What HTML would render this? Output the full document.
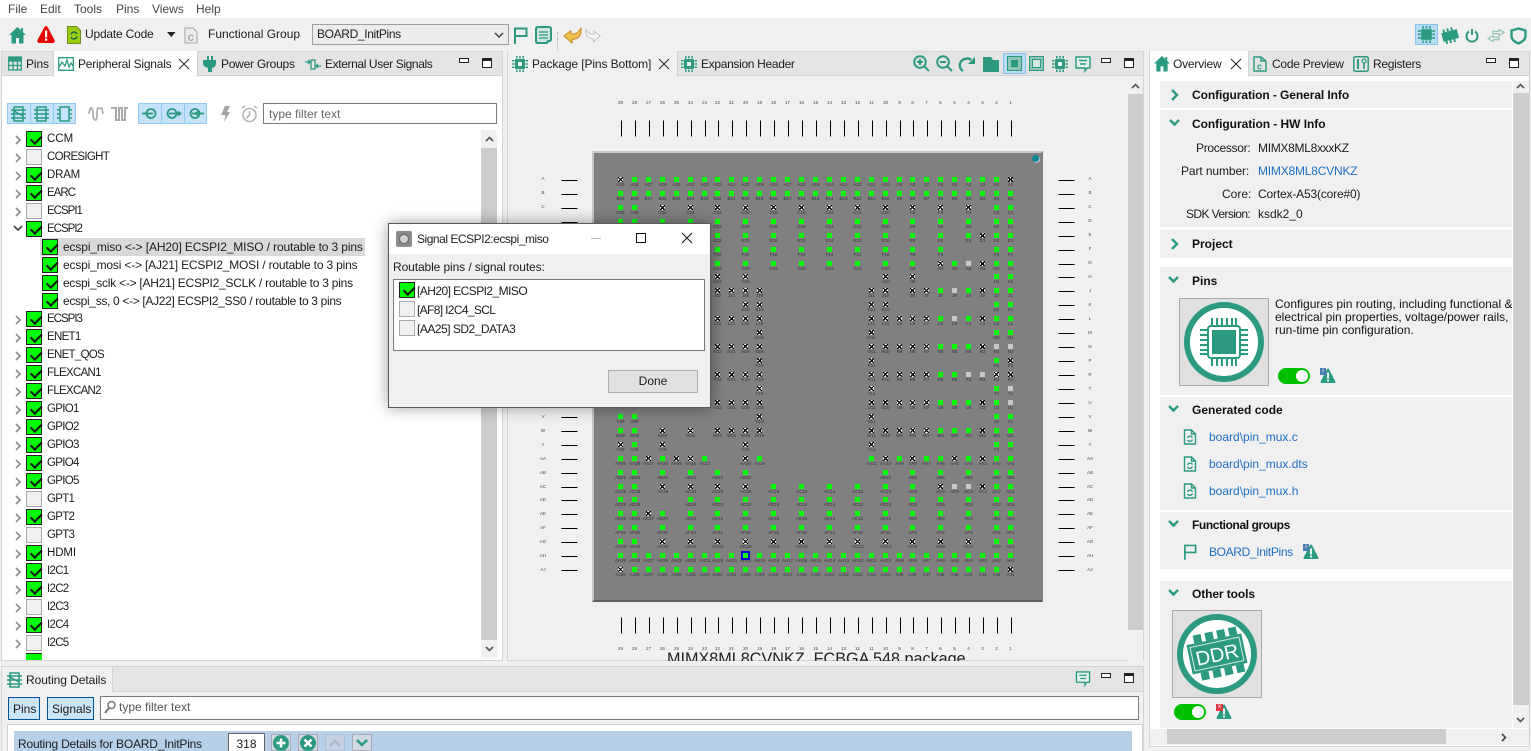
<!DOCTYPE html>
<html><head><meta charset="utf-8"><title>Pins</title>
<style>
*{box-sizing:border-box}
html,body{margin:0;padding:0;width:1531px;height:751px;overflow:hidden;background:#f0f0f0}
body{position:relative;font-family:"Liberation Sans",sans-serif;font-size:12px;color:#1c1c1c}
.t{position:absolute;white-space:nowrap;line-height:16px}
.a{position:absolute}
svg{position:absolute;overflow:visible}
.strip{position:absolute;background:#e4e4e4;border-bottom:1px solid #d2d2d2}
.panel{position:absolute;background:#fff;border:1px solid #d4d4d4}
.cb{position:absolute;width:16px;height:16px;background:#0f0;border:1px solid #222}
.cb:after{content:"";position:absolute;left:3px;top:1px;width:9px;height:5px;border-left:2px solid #111;border-bottom:2px solid #111;transform:rotate(-45deg) translate(-1px,2px)}
.cb.n{background:#f0f0f0;border-color:#aaa}
.cb.n:after{display:none}
.cb + .t{margin-top:1px;font-size:11.5px;letter-spacing:-.7px}
.sec{position:absolute;left:1160px;width:352px;background:#f0f0f0}
.b{font-weight:bold;color:#111}
.l{color:#1f6fc4}
#g{position:absolute;left:615px;top:177px;display:grid;grid-template-rows:repeat(6,14px) 13px repeat(15,14px) 13px repeat(6,14px)}
.r,.n{display:grid;grid-template-columns:repeat(6,14px) 13px repeat(13,14px) 13px repeat(8,14px)}
#g i{display:block;position:relative;width:11px;height:13px;font:normal 4.5px/5px "Liberation Sans",sans-serif;color:#333;text-align:center;padding-top:5px;white-space:nowrap;background:linear-gradient(#0f0,#0f0) 3px 0/5px 5px no-repeat}
#g i.x{background:linear-gradient(45deg,transparent 40%,#000 40% 60%,transparent 60%) 3px 0/5px 5px no-repeat,linear-gradient(-45deg,transparent 40%,#000 40% 60%,transparent 60%) 3px 0/5px 5px no-repeat,linear-gradient(#fff,#fff) 3px 0/5px 5px no-repeat}
#g i.e{background:linear-gradient(#c8c8c8,#c8c8c8) 3px 0/5px 5px no-repeat}
#g i.s:before{content:"";position:absolute;left:1px;top:-2px;width:5px;height:5px;border:2px solid #00c}
.n{position:absolute;left:615px}
.n span{display:block;width:11px;text-align:center;font-size:4.5px;line-height:5px;color:#444}
.lb{font-size:4.5px;line-height:5px;color:#444;position:absolute;width:10px;text-align:center}
.dlg{position:absolute;left:388px;top:223px;width:323px;height:185px;background:#f0f0f0;border:1px solid #5a5a5a;box-shadow:0 0 14px rgba(0,0,0,.38)}
</style></head><body>
<svg width="0" height="0" style="position:absolute"><defs>
<symbol id="chip" viewBox="0 0 16 16"><path fill="#2b9a81" d="M4 3h8a1 1 0 0 1 1 1v8a1 1 0 0 1-1 1H4a1 1 0 0 1-1-1V4a1 1 0 0 1 1-1zM4 0h1.500v2.500H4zM7.200 0h1.500v2.500H7.200zM10.500 0H12v2.500h-1.500zM4 13.500h1.500V16H4zM7.200 13.500h1.500V16H7.200zM10.500 13.500H12V16h-1.500zM0 4h2.500v1.500H0zM0 7.200h2.500v1.500H0zM0 10.500h2.500V12H0zM13.500 4H16v1.500h-2.500zM13.500 7.200H16v1.500h-2.500zM13.500 10.500H16V12h-2.500z"/><rect x="6" y="6" width="4" height="4" fill="#e8f4f0"/></symbol>
<symbol id="chip2" viewBox="0 0 16 16"><path fill="#2b9a81" d="M4 0h1.500v2.500H4zM7.200 0h1.500v2.500H7.200zM10.500 0H12v2.500h-1.500zM4 13.500h1.500V16H4zM7.200 13.500h1.500V16H7.200zM10.500 13.500H12V16h-1.500zM0 4h2.500v1.500H0zM0 7.200h2.500v1.500H0zM0 10.500h2.500V12H0zM13.500 4H16v1.500h-2.500zM13.500 7.200H16v1.500h-2.500zM13.500 10.500H16V12h-2.500z"/><rect x="3" y="3" width="10" height="10" fill="#2b9a81"/></symbol>
<symbol id="warn" viewBox="0 0 16 16"><path fill="#2b9a81" stroke="#2b9a81" stroke-width="2" stroke-linejoin="round" d="M8 2l6.500 12.500h-13z"/><rect x="7.100" y="5" width="1.800" height="6" fill="#fff"/><rect x="7.100" y="12" width="1.800" height="2" fill="#fff"/></symbol>
<symbol id="doc" viewBox="0 0 14 16"><path fill="none" stroke="#2b9a81" stroke-width="1.400" d="M1.500 1h7l4 4v10h-11zM8.500 1v4h4"/><path fill="none" stroke="#2b9a81" stroke-width="1.300" d="M9.500 8.500A2.800 2.800 0 0 0 4.500 9M4.500 11a2.800 2.800 0 0 0 5-.5"/></symbol>
<path id="tx" d="M621 120v16M635 120v16M649 120v16M663 120v16M677 120v16M691 120v16M705 120v16M718 120v16M732 120v16M746 120v16M760 120v16M774 120v16M788 120v16M802 120v16M816 120v16M830 120v16M844 120v16M858 120v16M872 120v16M886 120v16M900 120v16M913 120v16M927 120v16M941 120v16M955 120v16M969 120v16M983 120v16M997 120v16M1011 120v16" stroke="#000" stroke-width="1" fill="none"/>
<path id="ty" d="M561 180h16M561 194h16M561 208h16M561 222h16M561 236h16M561 250h16M561 264h16M561 277h16M561 291h16M561 305h16M561 319h16M561 333h16M561 347h16M561 361h16M561 375h16M561 389h16M561 403h16M561 417h16M561 431h16M561 445h16M561 459h16M561 473h16M561 487h16M561 500h16M561 514h16M561 528h16M561 542h16M561 556h16M561 570h16" stroke="#000" stroke-width="1" fill="none"/>
</defs></svg>

<!-- menu -->
<div class="a" style="left:0;top:0;width:1531px;height:18px;background:#fff"></div>
<span class="t" style="left:8px;top:1px;color:#444">File</span>
<span class="t" style="left:40px;top:1px;color:#444">Edit</span>
<span class="t" style="left:74px;top:1px;color:#444">Tools</span>
<span class="t" style="left:116px;top:1px;color:#444">Pins</span>
<span class="t" style="left:152px;top:1px;color:#444">Views</span>
<span class="t" style="left:196px;top:1px;color:#444">Help</span>

<!-- toolbar -->
<svg style="left:9px;top:27px" width="17" height="17" viewBox="0 0 17 17"><path fill="#2b9a81" d="M8.500 0L0 8h2.500v8.500h4.500V11h3v5.500h4.500V8H17L14 5.200V1h-2v2.300z"/></svg>
<svg style="left:37px;top:26px" width="18" height="17" viewBox="0 0 18 17"><path fill="#e60000" d="M9 0q1 0 1.700 1.200L17.500 14q.8 2.500-1.500 3H2q-2.300-.5-1.500-3L7.300 1.200Q8 0 9 0z"/><rect x="8" y="4.500" width="2.200" height="7" fill="#fff"/><rect x="8" y="12.500" width="2.200" height="2.300" fill="#fff"/></svg>
<svg style="left:67px;top:26px" width="14" height="18" viewBox="0 0 14 18"><path fill="#9acd12" stroke="#6b8f1c" d="M.5.500h9l4 4v13H.5z"/><path fill="none" stroke="#1f6b48" stroke-width="1.500" d="M10 8a3.200 3.200 0 0 0-6 .5M4 11a3.200 3.200 0 0 0 6-.5"/></svg>
<span class="t" style="left:85px;top:26px;letter-spacing:-.2px">Update Code</span>
<svg style="left:167px;top:32px" width="9" height="5"><path d="M0 0h8.500L4.300 5z" fill="#222"/></svg>
<svg style="left:184px;top:27px" width="14" height="17" viewBox="0 0 14 17"><path fill="#ececec" stroke="#b4b4b4" stroke-width="1.300" d="M1 1h8l4 4v11H1z"/><text x="3.500" y="14" font-family="Liberation Sans" font-size="12" font-weight="bold" fill="#aaa">c</text></svg>
<span class="t" style="left:208px;top:26px">Functional Group</span>
<div class="a" style="left:312px;top:24px;width:197px;height:21px;background:#ececec;border:1px solid #9f9f9f"></div>
<span class="t" style="left:317px;top:26px;letter-spacing:-.35px">BOARD_InitPins</span>
<svg style="left:494px;top:32px" width="10" height="7"><path d="M1 1l4 4 4-4" fill="none" stroke="#444" stroke-width="1.500"/></svg>
<svg style="left:513px;top:27px" width="15" height="17" viewBox="0 0 15 17"><path fill="none" stroke="#2b9a81" stroke-width="2" d="M2 17V1.500h11.500v7.500H2"/></svg>
<svg style="left:535px;top:26px" width="17" height="18" viewBox="0 0 17 18"><path fill="#cfe7e0" stroke="#2b9a81" stroke-width="2" d="M3 1h11q2 0 2 2v10q0 2-2 2h-1l-1 2H3q-2 0-2-2V3q0-2 2-2z"/><path stroke="#2b9a81" stroke-width="1.300" d="M4 6h9M4 9h9M4 12h9"/></svg>
<div class="a" style="left:557px;top:32px;width:1px;height:18px;border-left:1px dotted #aaa"></div>
<svg style="left:563px;top:27px" width="19" height="17" viewBox="0 0 19 17"><path fill="#f2c14e" stroke="#c8892a" stroke-linejoin="round" d="M18 1q1 9-6 11l-3 .5V16L1 9l7-5.500V7h3q4-.5 7-6z"/></svg>
<svg style="left:585px;top:27px" width="16" height="17" viewBox="0 0 19 17"><path fill="#f6f6f6" stroke="#c4c4c4" stroke-width="1.300" stroke-linejoin="round" d="M1 1q-1 9 6 11l3 .5V16l8-7-7-5.500V7H8Q4 6.500 1 1z"/></svg>

<div class="a" style="left:1415px;top:24px;width:23px;height:21px;background:#b9dcf5;border:1px solid #8cc3ee"></div>
<svg style="left:1418px;top:26px" width="17" height="17"><use href="#chip2"/></svg>
<svg style="left:1441px;top:27px" width="18" height="16" viewBox="0 0 18 16"><g transform="rotate(-15 9 8)" fill="#2b9a81"><rect x="1" y="4" width="16" height="9"/><path d="M3 1h2v3H3zM7 1h2v3H7zM11 1h2v3h-2zM3 13h2v3H3zM7 13h2v3H7zM11 13h2v3h-2z"/></g></svg>
<svg style="left:1465px;top:29px" width="14" height="14" viewBox="0 0 14 14"><path fill="none" stroke="#2b9a81" stroke-width="2" d="M4 2.500a5.500 5.500 0 1 0 6 0M7 0v6"/></svg>
<svg style="left:1487px;top:29px" width="18" height="13" viewBox="0 0 18 13"><path fill="#f2f2f2" stroke="#7fb8a8" d="M12 .5l5 3-5 3V4.800H6V2.200h6zM6 6.500l-5 3 5 3v-1.700h6V8.200H6z"/></svg>
<svg style="left:1510px;top:27px" width="17" height="18" viewBox="0 0 17 18"><path fill="none" stroke="#2b9a81" stroke-width="2.400" d="M8.500 1.500L15.500 3.500V9q0 4.500-7 7.500Q1.500 13.500 1.500 9V3.500z"/></svg>

<!-- left panel -->
<div class="panel" style="left:1px;top:51px;width:502px;height:610px"></div>
<div class="strip" style="left:2px;top:52px;width:500px;height:24px"></div>
<div class="a" style="left:53px;top:51px;width:145px;height:26px;background:#fff;border-right:1px solid #d2d2d2;border-left:1px solid #d2d2d2"></div>
<svg style="left:8px;top:56px" width="14" height="15" viewBox="0 0 14 15"><path fill="none" stroke="#2b9a81" stroke-width="1.300" d="M.7 1h12.600v13H.7zM.7 5h12.600M.7 9.500h12.600M5 1v13M9.500 1v13"/><rect x=".7" y="1" width="12.600" height="4" fill="#2b9a81"/></svg>
<span class="t" style="left:26px;top:56px;letter-spacing:-.1px">Pins</span>
<svg style="left:58px;top:57px" width="16" height="14" viewBox="0 0 16 14"><path fill="none" stroke="#2b9a81" stroke-width="1.300" d="M.7.700h14.600v12.600H.7zM1 10l3-5 3 4 2-6 2 7 2-4 2 3"/></svg>
<span class="t" style="left:78px;top:56px;letter-spacing:-.22px">Peripheral Signals</span>
<svg style="left:179px;top:59px" width="10" height="10"><path d="M0 0l10 10M10 0L0 10" stroke="#222" fill="none"/></svg>
<svg style="left:203px;top:56px" width="13" height="16" viewBox="0 0 13 16"><path fill="#2b9a81" d="M4 0h2v4h2V0h2v4h3v3q0 4-4 5v4H5v-4Q0 11 0 7V4h4z"/></svg>
<span class="t" style="left:221px;top:56px;letter-spacing:-.25px">Power Groups</span>
<svg style="left:305px;top:57px" width="16" height="14" viewBox="0 0 16 14"><rect x="6" y="3" width="4" height="9" fill="none" stroke="#2b9a81" stroke-width="1.300"/><path stroke="#2b9a81" stroke-width="1.300" fill="none" d="M0 5h5M3 3l2 2-2 2M16 9h-5M13 7l-2 2 2 2"/></svg>
<span class="t" style="left:325px;top:56px;letter-spacing:-.38px">External User Signals</span>
<div class="a" style="left:459px;top:58px;width:10px;height:5px;border:1.300px solid #222;background:#fff"></div>
<div class="a" style="left:482px;top:58px;width:10px;height:10px;border:1.300px solid #222;border-top-width:3px;background:#fff"></div>

<div class="a" style="left:7px;top:103px;width:69px;height:21px;background:#c4e3fa;border:1px solid #93c8f0"></div>
<div class="a" style="left:30px;top:103px;width:1px;height:21px;background:#93c8f0"></div>
<div class="a" style="left:53px;top:103px;width:1px;height:21px;background:#93c8f0"></div>
<svg style="left:11px;top:106px" width="15" height="16" viewBox="0 0 15 16"><path fill="none" stroke="#2b9a81" stroke-width="1.500" d="M3 1h9v14H3zM0 4h15M0 8h15M0 12h15M3 5l9 5"/></svg>
<svg style="left:34px;top:106px" width="15" height="16" viewBox="0 0 15 16"><path fill="none" stroke="#2b9a81" stroke-width="1.500" d="M3 1h9v14H3zM0 4h15M0 8h15M0 12h15"/></svg>
<svg style="left:57px;top:106px" width="15" height="16" viewBox="0 0 15 16"><path fill="none" stroke="#2b9a81" stroke-width="1.500" d="M3 1h9v14H3zM0 4h3M0 8h3M0 12h3M12 4h3M12 8h3M12 12h3"/></svg>
<svg style="left:88px;top:106px" width="16" height="15" viewBox="0 0 16 15"><path fill="none" stroke="#b0b0b0" stroke-width="1.800" d="M1 8q1-7 2.500-6T5 8t2 6 2-6 1.500-6T13 2t2 6"/></svg>
<svg style="left:111px;top:107px" width="17" height="14" viewBox="0 0 17 14"><path fill="none" stroke="#a8a8a8" stroke-width="2" d="M0 1h5v12h3V1h3v12h3V1h3"/></svg>
<div class="a" style="left:138px;top:103px;width:69px;height:21px;background:#c4e3fa;border:1px solid #93c8f0"></div>
<div class="a" style="left:161px;top:103px;width:1px;height:21px;background:#93c8f0"></div>
<div class="a" style="left:184px;top:103px;width:1px;height:21px;background:#93c8f0"></div>
<svg style="left:142px;top:107px" width="16" height="13" viewBox="0 0 16 13"><circle cx="9" cy="6.500" r="4.500" fill="none" stroke="#2b9a81" stroke-width="1.800"/><path stroke="#2b9a81" stroke-width="1.800" d="M0 6.500h11"/></svg>
<svg style="left:165px;top:107px" width="16" height="13" viewBox="0 0 16 13"><circle cx="7" cy="6.500" r="4.500" fill="none" stroke="#2b9a81" stroke-width="1.800"/><path stroke="#2b9a81" stroke-width="1.800" fill="none" d="M4 6.500h11M13 4.500l2.500 2-2.500 2"/></svg>
<svg style="left:188px;top:107px" width="16" height="13" viewBox="0 0 16 13"><circle cx="7" cy="6.500" r="4.500" fill="none" stroke="#2b9a81" stroke-width="1.800"/><path stroke="#2b9a81" stroke-width="1.800" fill="none" d="M4 6.500h12"/><path d="M10 3.500L6 6.500l4 3z" fill="#2b9a81"/></svg>
<svg style="left:221px;top:106px" width="9" height="16" viewBox="0 0 9 16"><path fill="#a4a4a4" d="M4 0h5L6 6h3l-6 10 1.500-7H0z"/></svg>
<svg style="left:241px;top:105px" width="17" height="18" viewBox="0 0 17 18"><circle cx="8.500" cy="10" r="6.500" fill="none" stroke="#b4b4b4" stroke-width="1.600"/><path fill="none" stroke="#b4b4b4" stroke-width="1.600" d="M8.500 6v4l-3 3M1 3l3-2M16 3l-3-2"/></svg>
<div class="a" style="left:263px;top:103px;width:234px;height:21px;background:#fff;border:1px solid #7a7a7a"></div>
<span class="t" style="left:269px;top:106px;color:#666">type filter text</span>

<!-- tree -->
<svg style="left:14px;top:135px" width="10" height="530" viewBox="0 0 10 530"><path fill="none" stroke="#8a8a8a" stroke-width="1.600" d="M2 1l4 4-4 4M2 19l4 4-4 4M2 37l4 4-4 4M2 55l4 4-4 4M2 73l4 4-4 4M2 181l4 4-4 4M2 199l4 4-4 4M2 217l4 4-4 4M2 235l4 4-4 4M2 253l4 4-4 4M2 271l4 4-4 4M2 289l4 4-4 4M2 307l4 4-4 4M2 325l4 4-4 4M2 343l4 4-4 4M2 361l4 4-4 4M2 379l4 4-4 4M2 397l4 4-4 4M2 415l4 4-4 4M2 433l4 4-4 4M2 451l4 4-4 4M2 469l4 4-4 4M2 487l4 4-4 4M2 505l4 4-4 4"/><path fill="none" stroke="#444" stroke-width="1.600" d="M0 91l4 4 4-4"/></svg>
<div class="a" style="left:40px;top:238px;width:325px;height:18px;background:#d9d9d9"></div>

<div class="cb" style="left:26px;top:131px"></div><span class="t" style="left:47px;top:130px;letter-spacing:0">CCM</span>
<div class="cb n" style="left:26px;top:149px"></div><span class="t" style="left:47px;top:148px">CORESIGHT</span>
<div class="cb" style="left:26px;top:167px"></div><span class="t" style="left:47px;top:166px;letter-spacing:-.2px">DRAM</span>
<div class="cb" style="left:26px;top:185px"></div><span class="t" style="left:47px;top:184px;letter-spacing:-1px">EARC</span>
<div class="cb n" style="left:26px;top:203px"></div><span class="t" style="left:47px;top:202px;letter-spacing:-1px">ECSPI1</span>
<div class="cb" style="left:26px;top:221px"></div><span class="t" style="left:47px;top:220px;letter-spacing:-1px">ECSPI2</span>
<div class="cb" style="left:42px;top:239px"></div><span class="t" style="left:63px;top:238px;font-size:12px;letter-spacing:-.13px">ecspi_miso &lt;-&gt; [AH20] ECSPI2_MISO / routable to 3 pins</span>
<div class="cb" style="left:42px;top:257px"></div><span class="t" style="left:63px;top:256px;font-size:12px;letter-spacing:-.18px">ecspi_mosi &lt;-&gt; [AJ21] ECSPI2_MOSI / routable to 3 pins</span>
<div class="cb" style="left:42px;top:275px"></div><span class="t" style="left:63px;top:274px;font-size:12px;letter-spacing:-.24px">ecspi_sclk &lt;-&gt; [AH21] ECSPI2_SCLK / routable to 3 pins</span>
<div class="cb" style="left:42px;top:293px"></div><span class="t" style="left:63px;top:292px;font-size:12px;letter-spacing:-.33px">ecspi_ss, 0 &lt;-&gt; [AJ22] ECSPI2_SS0 / routable to 3 pins</span>
<div class="cb" style="left:26px;top:311px"></div><span class="t" style="left:47px;top:310px;letter-spacing:-1px">ECSPI3</span>
<div class="cb" style="left:26px;top:329px"></div><span class="t" style="left:47px;top:328px">ENET1</span>
<div class="cb" style="left:26px;top:347px"></div><span class="t" style="left:47px;top:346px">ENET_QOS</span>
<div class="cb" style="left:26px;top:365px"></div><span class="t" style="left:47px;top:364px">FLEXCAN1</span>
<div class="cb" style="left:26px;top:383px"></div><span class="t" style="left:47px;top:382px">FLEXCAN2</span>
<div class="cb" style="left:26px;top:401px"></div><span class="t" style="left:47px;top:400px">GPIO1</span>
<div class="cb" style="left:26px;top:419px"></div><span class="t" style="left:47px;top:418px">GPIO2</span>
<div class="cb" style="left:26px;top:437px"></div><span class="t" style="left:47px;top:436px">GPIO3</span>
<div class="cb" style="left:26px;top:455px"></div><span class="t" style="left:47px;top:454px">GPIO4</span>
<div class="cb" style="left:26px;top:473px"></div><span class="t" style="left:47px;top:472px">GPIO5</span>
<div class="cb n" style="left:26px;top:491px"></div><span class="t" style="left:47px;top:490px">GPT1</span>
<div class="cb" style="left:26px;top:509px"></div><span class="t" style="left:47px;top:508px">GPT2</span>
<div class="cb n" style="left:26px;top:527px"></div><span class="t" style="left:47px;top:526px">GPT3</span>
<div class="cb" style="left:26px;top:545px"></div><span class="t" style="left:47px;top:544px;letter-spacing:-.1px">HDMI</span>
<div class="cb" style="left:26px;top:563px"></div><span class="t" style="left:47px;top:562px">I2C1</span>
<div class="cb" style="left:26px;top:581px"></div><span class="t" style="left:47px;top:580px">I2C2</span>
<div class="cb n" style="left:26px;top:599px"></div><span class="t" style="left:47px;top:598px">I2C3</span>
<div class="cb" style="left:26px;top:617px"></div><span class="t" style="left:47px;top:616px">I2C4</span>
<div class="cb n" style="left:26px;top:635px"></div><span class="t" style="left:47px;top:634px">I2C5</span>
<div class="a" style="left:26px;top:653px;width:16px;height:7px;background:#0f0;border-top:1px solid #222"></div>

<div class="a" style="left:481px;top:130px;width:16px;height:528px;background:#f0f0f0"></div>
<div class="a" style="left:481px;top:148px;width:16px;height:492px;background:#cdcdcd"></div>
<svg style="left:485px;top:136px" width="9" height="6"><path d="M1 5l3.500-3.500L8 5" fill="none" stroke="#555" stroke-width="1.600"/></svg>
<svg style="left:485px;top:646px" width="9" height="6"><path d="M1 1l3.500 3.500L8 1" fill="none" stroke="#555" stroke-width="1.600"/></svg>

<!-- center panel -->
<div class="panel" style="left:507px;top:51px;width:637px;height:610px;background:#f0f0f0"></div>
<div class="strip" style="left:508px;top:52px;width:635px;height:24px"></div>
<div class="a" style="left:508px;top:51px;width:170px;height:26px;background:#f0f0f0;border-right:1px solid #d2d2d2"></div>
<svg style="left:512px;top:56px" width="16" height="16"><use href="#chip"/></svg>
<span class="t" style="left:532px;top:56px;letter-spacing:-.1px">Package [Pins Bottom]</span>
<svg style="left:659px;top:59px" width="10" height="10"><path d="M0 0l10 10M10 0L0 10" stroke="#222" fill="none"/></svg>
<svg style="left:681px;top:56px" width="16" height="16"><use href="#chip"/></svg>
<span class="t" style="left:701px;top:56px;letter-spacing:-.32px">Expansion Header</span>
<svg style="left:913px;top:55px" width="17" height="17" viewBox="0 0 17 17"><circle cx="7" cy="7" r="5.800" fill="none" stroke="#2b9a81" stroke-width="2"/><path stroke="#2b9a81" stroke-width="2" d="M4 7h6M7 4v6M11 11l5 5"/></svg>
<svg style="left:936px;top:55px" width="17" height="17" viewBox="0 0 17 17"><circle cx="7" cy="7" r="5.800" fill="none" stroke="#2b9a81" stroke-width="2"/><path stroke="#2b9a81" stroke-width="2" d="M4 7h6M11 11l5 5"/></svg>
<svg style="left:960px;top:56px" width="16" height="16" viewBox="0 0 16 16"><path fill="none" stroke="#2b9a81" stroke-width="2.400" d="M3 15A6.500 6.500 0 0 1 5 3q4-1.500 6 1"/><path fill="#2b9a81" d="M15 1v7H8z"/></svg>
<svg style="left:983px;top:57px" width="16" height="15" viewBox="0 0 16 15"><path fill="#2b9a81" d="M0 0h8l2 3h6v12H0z"/></svg>
<div class="a" style="left:1003px;top:53px;width:23px;height:21px;background:#b9dcf5;border:1px solid #8cc3ee"></div>
<div class="a" style="left:1007px;top:56px;width:15px;height:15px;background:#8ec5b6;border:1px solid #2b9a81"></div>
<div class="a" style="left:1011px;top:60px;width:7px;height:7px;background:#2b9a81"></div>
<div class="a" style="left:1029px;top:56px;width:15px;height:15px;background:#8ec5b6;border:1px solid #2b9a81"></div>
<div class="a" style="left:1032px;top:59px;width:9px;height:9px;background:#d3e6e0;border:1.500px solid #2b9a81"></div>
<svg style="left:1052px;top:56px" width="16" height="16"><use href="#chip"/></svg>
<svg style="left:1075px;top:56px" width="16" height="16" viewBox="0 0 16 16"><path fill="#e4f0ec" stroke="#2b9a81" stroke-width="1.400" d="M1 1h14v11h-3l-2 3v-3H1z"/><path stroke="#2b9a81" stroke-width="1.400" d="M4 4.500h8M5 8h6"/></svg>
<div class="a" style="left:1101px;top:58px;width:10px;height:5px;border:1.300px solid #222;background:#fff"></div>
<div class="a" style="left:1124px;top:58px;width:10px;height:10px;border:1.300px solid #222;border-top-width:3px;background:#fff"></div>

<div class="a" style="left:1128px;top:77px;width:15px;height:584px;background:#f0f0f0"></div>
<div class="a" style="left:1128px;top:94px;width:15px;height:536px;background:#cdcdcd"></div>
<svg style="left:1131px;top:83px" width="9" height="6"><path d="M1 5l3.500-3.500L8 5" fill="none" stroke="#555" stroke-width="1.600"/></svg>

<svg style="left:0;top:0" width="1531" height="751"><g transform="translate(.5 .5)"><use href="#tx"/><use href="#tx" y="497"/><use href="#ty"/><use href="#ty" x="497"/></g></svg>
<div class="n" style="top:100px"><span>29</span><span>28</span><span>27</span><span>26</span><span>25</span><span>24</span><span>23</span><span>22</span><span>21</span><span>20</span><span>19</span><span>18</span><span>17</span><span>16</span><span>15</span><span>14</span><span>13</span><span>12</span><span>11</span><span>10</span><span>9</span><span>8</span><span>7</span><span>6</span><span>5</span><span>4</span><span>3</span><span>2</span><span>1</span></div>
<div class="n" style="top:646px"><span>29</span><span>28</span><span>27</span><span>26</span><span>25</span><span>24</span><span>23</span><span>22</span><span>21</span><span>20</span><span>19</span><span>18</span><span>17</span><span>16</span><span>15</span><span>14</span><span>13</span><span>12</span><span>11</span><span>10</span><span>9</span><span>8</span><span>7</span><span>6</span><span>5</span><span>4</span><span>3</span><span>2</span><span>1</span></div>
<div class="lb" style="left:538px;top:176px">A</div><div class="lb" style="left:538px;top:190px">B</div><div class="lb" style="left:538px;top:204px">C</div><div class="lb" style="left:538px;top:414px">V</div><div class="lb" style="left:538px;top:428px">W</div><div class="lb" style="left:538px;top:442px">Y</div><div class="lb" style="left:538px;top:456px">AA</div><div class="lb" style="left:538px;top:470px">AB</div><div class="lb" style="left:538px;top:484px">AC</div><div class="lb" style="left:538px;top:497px">AD</div><div class="lb" style="left:538px;top:511px">AE</div><div class="lb" style="left:538px;top:525px">AF</div><div class="lb" style="left:538px;top:539px">AG</div><div class="lb" style="left:538px;top:553px">AH</div><div class="lb" style="left:538px;top:567px">AJ</div>
<div class="lb" style="left:1085px;top:176px">A</div><div class="lb" style="left:1085px;top:190px">B</div><div class="lb" style="left:1085px;top:204px">C</div><div class="lb" style="left:1085px;top:218px">D</div><div class="lb" style="left:1085px;top:232px">E</div><div class="lb" style="left:1085px;top:246px">F</div><div class="lb" style="left:1085px;top:260px">G</div><div class="lb" style="left:1085px;top:274px">H</div><div class="lb" style="left:1085px;top:288px">J</div><div class="lb" style="left:1085px;top:302px">K</div><div class="lb" style="left:1085px;top:316px">L</div><div class="lb" style="left:1085px;top:330px">M</div><div class="lb" style="left:1085px;top:344px">N</div><div class="lb" style="left:1085px;top:358px">P</div><div class="lb" style="left:1085px;top:372px">R</div><div class="lb" style="left:1085px;top:386px">T</div><div class="lb" style="left:1085px;top:400px">U</div><div class="lb" style="left:1085px;top:414px">V</div><div class="lb" style="left:1085px;top:428px">W</div><div class="lb" style="left:1085px;top:442px">Y</div><div class="lb" style="left:1085px;top:456px">AA</div><div class="lb" style="left:1085px;top:470px">AB</div><div class="lb" style="left:1085px;top:484px">AC</div><div class="lb" style="left:1085px;top:497px">AD</div><div class="lb" style="left:1085px;top:511px">AE</div><div class="lb" style="left:1085px;top:525px">AF</div><div class="lb" style="left:1085px;top:539px">AG</div><div class="lb" style="left:1085px;top:553px">AH</div><div class="lb" style="left:1085px;top:567px">AJ</div>

<div class="a" style="left:592px;top:151px;width:451px;height:451px;background:#808080;border:2px solid #c8c8c8;border-right-color:#808080;border-bottom-color:#5e5e5e"></div>
<div class="a" style="left:1032px;top:155px;width:7px;height:7px;border-radius:50%;background:#0b8a96;box-shadow:1px 1px 0 #bcd"></div>

<div id="g">
<div class="r"><i class="x">A29</i><i>A28</i><i>A27</i><i>A26</i><i>A25</i><i>A24</i><i>A23</i><i>A22</i><i>A21</i><i>A20</i><i>A19</i><i>A18</i><i>A17</i><i>A16</i><i>A15</i><i>A14</i><i>A13</i><i>A12</i><i>A11</i><i>A10</i><i>A9</i><i>A8</i><i>A7</i><i>A6</i><i>A5</i><i>A4</i><i>A3</i><i>A2</i><i class="x">A1</i></div>
<div class="r"><i>B29</i><i>B28</i><i>B27</i><i>B26</i><i>B25</i><i>B24</i><i>B23</i><i>B22</i><i>B21</i><i>B20</i><i>B19</i><i>B18</i><i>B17</i><i>B16</i><i>B15</i><i>B14</i><i>B13</i><i>B12</i><i>B11</i><i>B10</i><i>B9</i><i>B8</i><i>B7</i><i>B6</i><i>B5</i><i>B4</i><i>B3</i><i>B2</i><i>B1</i></div>
<div class="r"><i>C29</i><i>C28</i><u></u><i class="x">C26</i><u></u><i class="x">C24</i><u></u><i class="x">C22</i><u></u><i class="x">C20</i><u></u><i class="x">C18</i><u></u><i class="x">C16</i><u></u><i class="x">C14</i><u></u><i class="x">C12</i><u></u><i class="x">C10</i><u></u><i class="x">C8</i><u></u><i class="x">C6</i><u></u><i class="x">C4</i><u></u><i>C2</i><i>C1</i></div>
<div class="r"><i>D29</i><i>D28</i><u></u><i>D26</i><u></u><i>D24</i><u></u><i>D22</i><u></u><i>D20</i><u></u><i>D18</i><u></u><i>D16</i><u></u><i>D14</i><u></u><i>D12</i><u></u><i>D10</i><u></u><i>D8</i><u></u><i>D6</i><u></u><i>D4</i><u></u><i>D2</i><i>D1</i></div>
<div class="r"><i>E29</i><i>E28</i><u></u><i>E26</i><u></u><i>E24</i><u></u><i>E22</i><u></u><i>E20</i><u></u><i>E18</i><u></u><i>E16</i><u></u><i>E14</i><u></u><i>E12</i><u></u><i>E10</i><u></u><i>E8</i><u></u><i>E6</i><u></u><i>E4</i><i class="x">E3</i><i>E2</i><i>E1</i></div>
<div class="r"><i>F29</i><i>F28</i><u></u><i>F26</i><u></u><i>F24</i><u></u><i>F22</i><u></u><i>F20</i><u></u><i>F18</i><u></u><i>F16</i><u></u><i>F14</i><u></u><i>F12</i><u></u><i>F10</i><u></u><i>F8</i><u></u><i>F6</i><u></u><u></u><u></u><i>F2</i><i>F1</i></div>
<div class="r"><i>G29</i><i>G28</i><u></u><i>G26</i><u></u><i>G24</i><u></u><i>G22</i><u></u><i>G20</i><u></u><i>G18</i><u></u><i>G16</i><u></u><i>G14</i><u></u><i>G12</i><u></u><i>G10</i><u></u><i>G8</i><u></u><i class="x">G6</i><i>G5</i><i class="e">G4</i><i class="x">G3</i><i>G2</i><i>G1</i></div>
<div class="r"><i>H29</i><i>H28</i><u></u><i class="x">H26</i><u></u><u></u><u></u><i class="x">H22</i><u></u><i class="x">H20</i><u></u><u></u><u></u><u></u><u></u><u></u><u></u><u></u><u></u><i class="x">H10</i><u></u><i class="x">H8</i><u></u><u></u><u></u><u></u><u></u><i>H2</i><i>H1</i></div>
<div class="r"><i>J29</i><i>J28</i><u></u><i class="x">J26</i><u></u><u></u><u></u><i class="x">J22</i><i class="x">J21</i><i class="x">J20</i><i class="x">J19</i><u></u><u></u><u></u><u></u><u></u><u></u><u></u><i class="x">J11</i><i class="x">J10</i><u></u><i class="x">J8</i><i class="x">J7</i><i>J6</i><i class="e">J5</i><i>J4</i><i class="x">J3</i><i>J2</i><i>J1</i></div>
<div class="r"><i>K29</i><i>K28</i><u></u><u></u><u></u><u></u><u></u><u></u><u></u><i class="x">K20</i><i class="x">K19</i><u></u><u></u><u></u><u></u><u></u><u></u><u></u><i class="x">K11</i><i class="x">K10</i><u></u><u></u><u></u><u></u><u></u><u></u><u></u><i>K2</i><i>K1</i></div>
<div class="r"><i>L29</i><i>L28</i><u></u><u></u><u></u><u></u><u></u><i class="x">L22</i><i class="x">L21</i><i class="x">L20</i><i class="x">L19</i><u></u><u></u><u></u><u></u><u></u><u></u><u></u><i class="x">L11</i><i class="x">L10</i><i class="x">L9</i><i class="x">L8</i><i class="x">L7</i><i>L6</i><i class="e">L5</i><i>L4</i><i class="x">L3</i><i>L2</i><i>L1</i></div>
<div class="r"><u></u><u></u><u></u><u></u><u></u><u></u><u></u><u></u><u></u><u></u><i class="x">M19</i><u></u><u></u><u></u><u></u><u></u><u></u><u></u><i class="x">M11</i><u></u><u></u><u></u><u></u><u></u><u></u><u></u><u></u><i>M2</i><i>M1</i></div>
<div class="r"><u></u><u></u><u></u><u></u><u></u><u></u><u></u><i class="x">N22</i><i class="x">N21</i><i class="x">N20</i><i class="x">N19</i><u></u><u></u><u></u><u></u><u></u><u></u><u></u><i class="x">N11</i><i class="x">N10</i><i class="x">N9</i><i class="x">N8</i><i class="x">N7</i><i>N6</i><i>N5</i><i>N4</i><i class="x">N3</i><i class="e">N2</i><i class="e">N1</i></div>
<div class="r"><u></u><u></u><u></u><u></u><u></u><u></u><u></u><u></u><u></u><u></u><i class="x">P19</i><u></u><u></u><u></u><u></u><u></u><u></u><u></u><i class="x">P11</i><u></u><u></u><u></u><u></u><u></u><u></u><u></u><u></u><i>P2</i><i class="x">P1</i></div>
<div class="r"><u></u><u></u><u></u><u></u><u></u><u></u><u></u><i class="x">R22</i><i class="x">R21</i><i class="x">R20</i><i class="x">R19</i><u></u><u></u><u></u><u></u><u></u><u></u><u></u><i class="x">R11</i><i class="x">R10</i><i class="x">R9</i><i class="x">R8</i><i class="x">R7</i><i>R6</i><i>R5</i><i class="e">R4</i><i class="e">R3</i><i class="x">R2</i><i class="x">R1</i></div>
<div class="r"><u></u><u></u><u></u><u></u><u></u><u></u><u></u><u></u><u></u><u></u><i class="x">T19</i><u></u><u></u><u></u><u></u><u></u><u></u><u></u><i class="x">T11</i><u></u><u></u><u></u><u></u><u></u><u></u><u></u><u></u><i>T2</i><i class="e">T1</i></div>
<div class="r"><u></u><u></u><u></u><u></u><u></u><u></u><u></u><i class="x">U22</i><i class="x">U21</i><i class="x">U20</i><i class="x">U19</i><u></u><u></u><u></u><u></u><u></u><u></u><u></u><i class="x">U11</i><i class="x">U10</i><i class="x">U9</i><i class="x">U8</i><i class="x">U7</i><i>U6</i><i>U5</i><i>U4</i><i class="x">U3</i><i>U2</i><i class="e">U1</i></div>
<div class="r"><i>V29</i><i>V28</i><u></u><u></u><u></u><u></u><u></u><u></u><u></u><u></u><i class="x">V19</i><u></u><u></u><u></u><u></u><u></u><u></u><u></u><i class="x">V11</i><u></u><u></u><u></u><u></u><u></u><u></u><u></u><u></u><i>V2</i><i>V1</i></div>
<div class="r"><i>W29</i><i>W28</i><u></u><i class="x">W26</i><u></u><i class="x">W24</i><u></u><i class="x">W22</i><i class="x">W21</i><i class="x">W20</i><i class="x">W19</i><u></u><u></u><u></u><u></u><u></u><u></u><u></u><i class="x">W11</i><i class="x">W10</i><i class="x">W9</i><i class="x">W8</i><i class="x">W7</i><i>W6</i><i>W5</i><i>W4</i><i class="x">W3</i><i>W2</i><i>W1</i></div>
<div class="r"><i class="x">Y29</i><i>Y28</i><u></u><i class="x">Y26</i><u></u><u></u><u></u><u></u><u></u><i class="x">Y20</i><u></u><u></u><u></u><u></u><u></u><u></u><u></u><u></u><i class="x">Y11</i><u></u><u></u><u></u><u></u><u></u><u></u><u></u><u></u><i>Y2</i><i>Y1</i></div>
<div class="r"><i>AA29</i><i>AA28</i><i class="x">AA27</i><i>AA26</i><i class="x">AA25</i><i class="x">AA24</i><i>AA23</i><u></u><u></u><i class="x">AA20</i><i>AA19</i><u></u><u></u><u></u><u></u><u></u><u></u><u></u><i>AA11</i><i class="x">AA10</i><i>AA9</i><i class="x">AA8</i><i>AA7</i><i>AA6</i><i class="x">AA5</i><i>AA4</i><i class="x">AA3</i><i>AA2</i><i>AA1</i></div>
<div class="r"><i>AB29</i><i>AB28</i><u></u><i>AB26</i><u></u><i>AB24</i><u></u><i>AB22</i><u></u><i>AB20</i><u></u><u></u><u></u><u></u><u></u><u></u><u></u><u></u><u></u><i>AB10</i><u></u><i>AB8</i><u></u><i>AB6</i><u></u><i>AB4</i><u></u><i>AB2</i><i>AB1</i></div>
<div class="r"><i>AC29</i><i>AC28</i><u></u><i class="x">AC26</i><u></u><i class="x">AC24</i><u></u><i class="x">AC22</i><u></u><i class="x">AC20</i><u></u><i>AC18</i><u></u><i>AC16</i><u></u><i>AC14</i><u></u><i>AC12</i><u></u><i>AC10</i><u></u><i>AC8</i><u></u><i class="x">AC6</i><i class="e">AC5</i><i class="e">AC4</i><i class="x">AC3</i><i>AC2</i><i>AC1</i></div>
<div class="r"><i>AD29</i><i>AD28</i><u></u><u></u><u></u><i>AD24</i><u></u><i>AD22</i><u></u><i>AD20</i><u></u><i>AD18</i><u></u><i>AD16</i><u></u><i>AD14</i><u></u><i>AD12</i><u></u><i>AD10</i><u></u><i>AD8</i><u></u><i>AD6</i><u></u><i>AD4</i><u></u><i>AD2</i><i>AD1</i></div>
<div class="r"><i>AE29</i><i>AE28</i><i class="x">AE27</i><i>AE26</i><u></u><i>AE24</i><u></u><i>AE22</i><u></u><i>AE20</i><u></u><i>AE18</i><u></u><i>AE16</i><u></u><i>AE14</i><u></u><i>AE12</i><u></u><i>AE10</i><u></u><i>AE8</i><u></u><i>AE6</i><u></u><i>AE4</i><u></u><i>AE2</i><i>AE1</i></div>
<div class="r"><i>AF29</i><i>AF28</i><u></u><i>AF26</i><u></u><i>AF24</i><u></u><i>AF22</i><u></u><i>AF20</i><u></u><i>AF18</i><u></u><i>AF16</i><u></u><i>AF14</i><u></u><i>AF12</i><u></u><i>AF10</i><u></u><i>AF8</i><u></u><i>AF6</i><u></u><i>AF4</i><u></u><i>AF2</i><i>AF1</i></div>
<div class="r"><i>AG29</i><i>AG28</i><u></u><i class="x">AG26</i><u></u><i class="x">AG24</i><u></u><i class="x">AG22</i><u></u><i class="x">AG20</i><u></u><i class="x">AG18</i><u></u><i class="x">AG16</i><u></u><i class="x">AG14</i><u></u><i class="x">AG12</i><u></u><i class="x">AG10</i><u></u><i class="x">AG8</i><u></u><i class="x">AG6</i><u></u><i class="x">AG4</i><u></u><i>AG2</i><i>AG1</i></div>
<div class="r"><i>AH29</i><i>AH28</i><i>AH27</i><i>AH26</i><i>AH25</i><i>AH24</i><i>AH23</i><i>AH22</i><i>AH21</i><i class="s">AH20</i><i>AH19</i><i>AH18</i><i>AH17</i><i>AH16</i><i>AH15</i><i>AH14</i><i>AH13</i><i>AH12</i><i>AH11</i><i>AH10</i><i>AH9</i><i>AH8</i><i>AH7</i><i>AH6</i><i>AH5</i><i>AH4</i><i>AH3</i><i>AH2</i><i>AH1</i></div>
<div class="r"><i class="x">AJ29</i><i>AJ28</i><i>AJ27</i><i>AJ26</i><i>AJ25</i><i>AJ24</i><i>AJ23</i><i>AJ22</i><i>AJ21</i><i>AJ20</i><i>AJ19</i><i>AJ18</i><i>AJ17</i><i>AJ16</i><i>AJ15</i><i>AJ14</i><i>AJ13</i><i>AJ12</i><i>AJ11</i><i>AJ10</i><i>AJ9</i><i>AJ8</i><i>AJ7</i><i>AJ6</i><i>AJ5</i><i>AJ4</i><i>AJ3</i><i>AJ2</i><i class="x">AJ1</i></div>
</div>

<div class="a" style="left:508px;top:640px;width:620px;height:21px;overflow:hidden"><span class="t" style="left:159px;top:9px;font-size:16.2px;line-height:20px;color:#222">MIMX8ML8CVNKZ, FCBGA 548 package</span></div>

<!-- right panel -->
<div class="panel" style="left:1149px;top:51px;width:381px;height:696px;background:#fff"></div>
<div class="strip" style="left:1150px;top:52px;width:379px;height:24px"></div>
<div class="a" style="left:1150px;top:51px;width:99px;height:26px;background:#fff;border-right:1px solid #d2d2d2"></div>
<svg style="left:1154px;top:56px" width="16" height="16" viewBox="0 0 17 17"><path fill="#2b9a81" d="M8.500 0L0 8h2.500v8.500h4.500V11h3v5.500h4.500V8H17L14 5.200V1h-2v2.300z"/></svg>
<span class="t" style="left:1173px;top:56px;letter-spacing:-.2px">Overview</span>
<svg style="left:1231px;top:59px" width="10" height="10"><path d="M0 0l10 10M10 0L0 10" stroke="#222" fill="none"/></svg>
<svg style="left:1253px;top:56px" width="14" height="16" viewBox="0 0 14 16"><path fill="none" stroke="#2b9a81" stroke-width="1.400" d="M1 1h7l5 4v10H1zM8 1v4h5"/><text x="4" y="13.500" font-family="Liberation Sans" font-size="9" font-weight="bold" fill="#2b9a81">c</text></svg>
<span class="t" style="left:1272px;top:56px;letter-spacing:-.25px">Code Preview</span>
<svg style="left:1353px;top:56px" width="16" height="16" viewBox="0 0 16 16"><rect x=".8" y=".8" width="14.400" height="14.400" rx="1.500" fill="none" stroke="#2b9a81" stroke-width="1.500"/><path stroke="#2b9a81" stroke-width="2" d="M5 3v10"/><path stroke="#2b9a81" stroke-width="1.600" d="M11 7v6"/><circle cx="11" cy="5" r="2" fill="none" stroke="#2b9a81" stroke-width="1.300"/></svg>
<span class="t" style="left:1373px;top:56px;letter-spacing:-.3px">Registers</span>
<div class="a" style="left:1486px;top:58px;width:10px;height:5px;border:1.300px solid #222;background:#fff"></div>
<div class="a" style="left:1509px;top:58px;width:10px;height:10px;border:1.300px solid #222;border-top-width:3px;background:#fff"></div>

<div class="a" style="left:1513px;top:81px;width:16px;height:647px;background:#f0f0f0"></div>
<div class="a" style="left:1513px;top:93px;width:16px;height:612px;background:#cdcdcd"></div>
<svg style="left:1516px;top:83px" width="9" height="6"><path d="M1 5l3.500-3.500L8 5" fill="none" stroke="#555" stroke-width="1.600"/></svg>
<svg style="left:1516px;top:717px" width="9" height="6"><path d="M1 1l3.500 3.500L8 1" fill="none" stroke="#555" stroke-width="1.600"/></svg>
<div class="a" style="left:1150px;top:729px;width:379px;height:16px;background:#f0f0f0"></div>
<div class="a" style="left:1167px;top:729px;width:279px;height:15px;background:#cdcdcd"></div>
<svg style="left:1501px;top:733px" width="6" height="9"><path d="M1 1l3.500 3.500L1 8" fill="none" stroke="#444" stroke-width="1.600"/></svg>

<div class="sec" style="top:81px;height:27px"></div>
<div class="sec" style="top:110px;height:117px"></div>
<div class="sec" style="top:230px;height:28px"></div>
<div class="sec" style="top:267px;height:128px;overflow:hidden"><span class="t" style="left:115px;top:31px;line-height:13px;white-space:pre;color:#111">Configures pin routing, including functional &amp;
electrical pin properties, voltage/power rails, a
run-time pin configuration.</span></div>
<div class="sec" style="top:397px;height:113px"></div>
<div class="sec" style="top:512px;height:57px"></div>
<div class="sec" style="top:581px;height:147px"></div>

<svg style="left:1170px;top:89px" width="9" height="160" viewBox="0 0 9 160"><path fill="none" stroke="#2b9a81" stroke-width="2.400" d="M2 1l5 5-5 5M2 150l5 5-5 5"/><path fill="none" stroke="#2b9a81" stroke-width="2.400" d="M0 31l4.500 4.500L9 31"/></svg>
<svg style="left:1168px;top:276px" width="11" height="325" viewBox="0 0 11 325"><path fill="none" stroke="#2b9a81" stroke-width="2.400" d="M1 1l4.500 4.500L10 1M1 130l4.500 4.500L10 130M1 245l4.500 4.500L10 245M1 314l4.500 4.500L10 314"/></svg>

<span class="t b" style="left:1192px;top:87px;letter-spacing:-.08px">Configuration - General Info</span>
<span class="t b" style="left:1192px;top:116px;letter-spacing:-.05px">Configuration - HW Info</span>
<span class="t" style="left:1196px;top:140px;letter-spacing:-.3px">Processor:</span><span class="t" style="left:1258px;top:140px;letter-spacing:-.3px">MIMX8ML8xxxKZ</span>
<span class="t" style="left:1181px;top:163px;letter-spacing:-.1px">Part number:</span><span class="t l" style="left:1258px;top:163px;letter-spacing:-.2px">MIMX8ML8CVNKZ</span>
<span class="t" style="left:1222px;top:186px">Core:</span><span class="t" style="left:1258px;top:186px;letter-spacing:-.17px">Cortex-A53(core#0)</span>
<span class="t" style="left:1186px;top:206px;letter-spacing:-.6px">SDK Version:</span><span class="t" style="left:1258px;top:206px">ksdk2_0</span>
<span class="t b" style="left:1192px;top:236px">Project</span>
<span class="t b" style="left:1192px;top:273px">Pins</span>

<div class="a" style="left:1179px;top:298px;width:90px;height:88px;background:#e0e0e0;border:1px solid #aaa"></div>
<svg style="left:1184px;top:302px" width="80" height="80" viewBox="0 0 80 80"><circle cx="40" cy="40" r="37" fill="#fff" stroke="#2b9a81" stroke-width="6"/><rect x="24" y="24" width="32" height="32" rx="3" fill="none" stroke="#2b9a81" stroke-width="2"/><rect x="28" y="28" width="24" height="24" fill="#2b9a81"/><path stroke="#2b9a81" stroke-width="2" d="M28 16v7M33 16v7M38 16v7M43 16v7M48 16v7M52 16v7M28 57v7M33 57v7M38 57v7M43 57v7M48 57v7M52 57v7M16 28h7M16 33h7M16 38h7M16 43h7M16 48h7M16 52h7M57 28h7M57 33h7M57 38h7M57 43h7M57 48h7M57 52h7"/></svg>
<div class="a" style="left:1278px;top:368px;width:32px;height:16px;border-radius:8px;background:#00c000"></div>
<div class="a" style="left:1296px;top:370px;width:12px;height:12px;border-radius:50%;background:#fff"></div>
<svg style="left:1320px;top:367px" width="16" height="17"><use href="#warn"/></svg>
<div class="a" style="left:1320px;top:368px;width:6px;height:7px;background:#4c7fb5;color:#fff;font-size:6px;line-height:7px;text-align:center">i</div>

<span class="t b" style="left:1192px;top:402px">Generated code</span>
<svg style="left:1183px;top:429px" width="14" height="16"><use href="#doc"/></svg>
<span class="t l" style="left:1209px;top:429px">board\pin_mux.c</span>
<svg style="left:1183px;top:456px" width="14" height="16"><use href="#doc"/></svg>
<span class="t l" style="left:1209px;top:456px">board\pin_mux.dts</span>
<svg style="left:1183px;top:483px" width="14" height="16"><use href="#doc"/></svg>
<span class="t l" style="left:1209px;top:483px">board\pin_mux.h</span>

<span class="t b" style="left:1192px;top:517px;letter-spacing:-.4px">Functional groups</span>
<svg style="left:1183px;top:544px" width="14" height="16" viewBox="0 0 15 17"><path fill="none" stroke="#2b9a81" stroke-width="1.800" d="M2 17V1.500h11.500v7.500H2"/></svg>
<span class="t l" style="left:1209px;top:544px;letter-spacing:-.35px">BOARD_InitPins</span>
<svg style="left:1303px;top:543px" width="16" height="17"><use href="#warn"/></svg>
<div class="a" style="left:1303px;top:544px;width:6px;height:7px;background:#4c7fb5;color:#fff;font-size:6px;line-height:7px;text-align:center">i</div>

<span class="t b" style="left:1192px;top:586px;letter-spacing:-.1px">Other tools</span>
<div class="a" style="left:1172px;top:610px;width:90px;height:88px;background:#e0e0e0;border:1px solid #aaa"></div>
<svg style="left:1177px;top:614px" width="80" height="80" viewBox="0 0 80 80"><circle cx="40" cy="40" r="37" fill="#fff" stroke="#2b9a81" stroke-width="6"/><g transform="rotate(-12 40 40)"><rect x="12" y="25" width="56" height="30" fill="#2b9a81"/><rect x="15" y="28" width="50" height="24" fill="none" stroke="#d8ece6"/><path fill="#2b9a81" d="M20 17h8v8h-8zM32 17h8v8h-8zM44 17h8v8h-8zM56 17h8v8h-8zM20 55h8v8h-8zM32 55h8v8h-8zM44 55h8v8h-8zM56 55h8v8h-8z"/><text x="40" y="47.500" text-anchor="middle" font-family="Liberation Sans" font-size="20" fill="#fff">DDR</text></g></svg>
<div class="a" style="left:1174px;top:704px;width:32px;height:16px;border-radius:8px;background:#00c000"></div>
<div class="a" style="left:1192px;top:706px;width:12px;height:12px;border-radius:50%;background:#fff"></div>
<svg style="left:1216px;top:703px" width="16" height="17"><use href="#warn"/></svg>
<div class="a" style="left:1216px;top:704px;width:7px;height:7px;background:#e03a4a;color:#fff;font-size:6px;line-height:7px;text-align:center">x</div>

<!-- bottom panel -->
<div class="a" style="left:1px;top:666px;width:1143px;height:85px;background:#f0f0f0;border:1px solid #d4d4d4;border-bottom:0"></div>
<div class="strip" style="left:2px;top:667px;width:1141px;height:25px"></div>
<div class="a" style="left:2px;top:667px;width:111px;height:25px;background:#f0f0f0;border-right:1px solid #d2d2d2"></div>
<svg style="left:7px;top:672px" width="15" height="16" viewBox="0 0 15 16"><path fill="none" stroke="#2b9a81" stroke-width="1.500" d="M3 1h9v14H3zM0 4h15M0 8h15M0 12h15M3 5l9 5"/></svg>
<span class="t" style="left:26px;top:672px;letter-spacing:-.07px">Routing Details</span>
<svg style="left:1075px;top:671px" width="16" height="15" viewBox="0 0 16 16"><path fill="#e4f0ec" stroke="#2b9a81" stroke-width="1.400" d="M1 1h14v11h-3l-2 3v-3H1z"/><path stroke="#2b9a81" stroke-width="1.400" d="M4 4.500h8M5 8h6"/></svg>
<div class="a" style="left:1101px;top:673px;width:10px;height:5px;border:1.300px solid #222;background:#fff"></div>
<div class="a" style="left:1124px;top:673px;width:10px;height:10px;border:1.300px solid #222;border-top-width:3px;background:#fff"></div>
<div class="a" style="left:8px;top:697px;width:32px;height:23px;background:#cce4f7;border:1px solid #005499"></div>
<span class="t" style="left:13px;top:701px">Pins</span>
<div class="a" style="left:47px;top:697px;width:47px;height:23px;background:#cce4f7;border:1px solid #005499"></div>
<span class="t" style="left:52px;top:701px">Signals</span>
<div class="a" style="left:100px;top:696px;width:1039px;height:24px;background:#fff;border:1px solid #7a7a7a"></div>
<svg style="left:104px;top:700px" width="12" height="15" viewBox="0 0 12 15"><circle cx="7.500" cy="5" r="3.500" fill="none" stroke="#777" stroke-width="1.500"/><path stroke="#777" stroke-width="2" d="M5 8L1 13"/></svg>
<span class="t" style="left:119px;top:699px;color:#555">type filter text</span>
<div class="a" style="left:7px;top:724px;width:1136px;height:27px;background:#fff;border:1px solid #d0d0d0;border-bottom:0"></div>
<div class="a" style="left:14px;top:731px;width:1118px;height:20px;background:#b8cfe8"></div>
<span class="t" style="left:18px;top:736px;letter-spacing:-.2px">Routing Details for BOARD_InitPins</span>
<div class="a" style="left:228px;top:733px;width:37px;height:18px;background:#fff;border:1px solid #666;border-bottom:0;text-align:center;line-height:20px">318</div>
<div class="a" style="left:271px;top:734px;width:20px;height:17px;background:#d0d8e2;border:1px solid #aab"></div>
<svg style="left:273px;top:735px" width="16" height="16"><circle cx="8" cy="8" r="8" fill="#2b9a81"/><path stroke="#fff" stroke-width="2.500" d="M3.500 8h9M8 3.500v9"/></svg>
<div class="a" style="left:298px;top:734px;width:20px;height:17px;background:#d0d8e2;border:1px solid #aab"></div>
<svg style="left:300px;top:735px" width="16" height="16"><circle cx="8" cy="8" r="8" fill="#2b9a81"/><path stroke="#fff" stroke-width="2.500" d="M4.500 4.500l7 7M11.500 4.500l-7 7"/></svg>
<div class="a" style="left:325px;top:734px;width:20px;height:17px;background:#c4d2e2;border:1px solid #b0c0d4"></div>
<svg style="left:329px;top:739px" width="12" height="8"><path d="M1 7l5-5 5 5" fill="none" stroke="#a9bccb" stroke-width="2.500"/></svg>
<div class="a" style="left:352px;top:734px;width:20px;height:17px;background:#d0d8e2;border:1px solid #aab"></div>
<svg style="left:356px;top:739px" width="12" height="8"><path d="M1 1l5 5 5-5" fill="none" stroke="#2b9a81" stroke-width="2.500"/></svg>

<!-- dialog -->
<div class="dlg">
<div class="a" style="left:0;top:0;width:321px;height:30px;background:#fff"></div>
<svg style="left:7px;top:7px" width="16" height="16" viewBox="0 0 16 16"><rect width="16" height="16" rx="2" fill="#8a8a8a"/><circle cx="8" cy="8" r="4.500" fill="#cfcfcf" stroke="#666"/></svg>
<span class="t" style="left:28px;top:7px;color:#222;letter-spacing:-.47px">Signal ECSPI2:ecspi_miso</span>
<div class="a" style="left:202px;top:14px;width:10px;height:1px;background:#bbb"></div>
<div class="a" style="left:247px;top:9px;width:10px;height:10px;border:1px solid #111"></div>
<svg style="left:293px;top:9px" width="10" height="10"><path d="M0 0l10 10M10 0L0 10" stroke="#111" fill="none"/></svg>
<span class="t" style="left:4px;top:35px;letter-spacing:-.1px">Routable pins / signal routes:</span>
<div class="a" style="left:4px;top:55px;width:312px;height:72px;background:#fff;border:1px solid #7a7a7a"></div>
<div class="cb" style="left:10px;top:58px"></div><span class="t" style="left:28px;top:58px;font-size:12px;letter-spacing:-.55px">[AH20] ECSPI2_MISO</span>
<div class="cb n" style="left:10px;top:77px"></div><span class="t" style="left:28px;top:77px;font-size:12px;letter-spacing:-.65px">[AF8] I2C4_SCL</span>
<div class="cb n" style="left:10px;top:96px"></div><span class="t" style="left:28px;top:96px;font-size:12px;letter-spacing:-.5px">[AA25] SD2_DATA3</span>
<div class="a" style="left:219px;top:146px;width:90px;height:23px;background:#e1e1e1;border:1px solid #adadad;text-align:center;line-height:21px">Done</div>
</div>
</body></html>
